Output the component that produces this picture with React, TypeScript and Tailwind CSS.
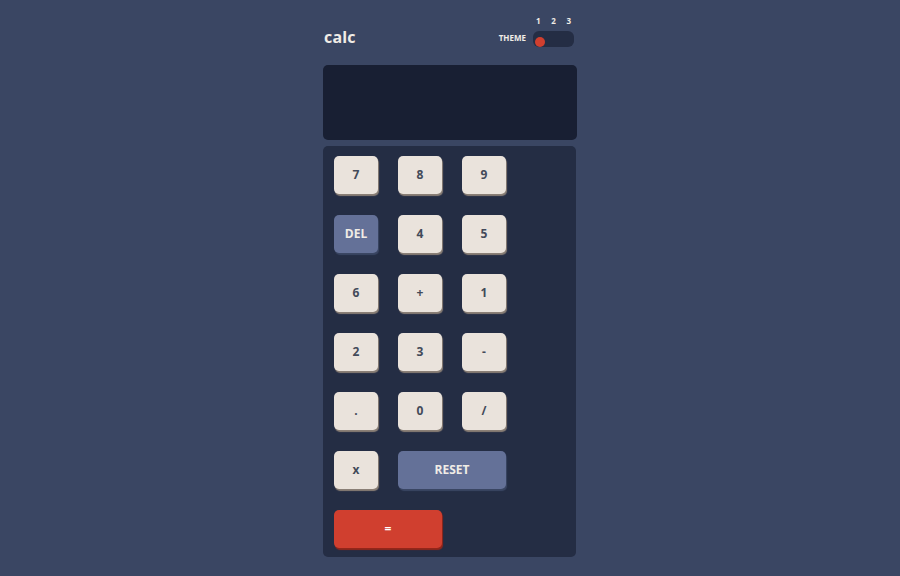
import React from "react";

type K = { label: string; kind?: "num" | "blue" | "red"; span?: boolean };

const keys: K[] = [
  { label: "7" }, { label: "8" }, { label: "9" },
  { label: "DEL", kind: "blue" }, { label: "4" }, { label: "5" },
  { label: "6" }, { label: "+" }, { label: "1" },
  { label: "2" }, { label: "3" }, { label: "-" },
  { label: "." }, { label: "0" }, { label: "/" },
  { label: "x" }, { label: "RESET", kind: "blue", span: true },
  { label: "=", kind: "red", span: true },
];

function Key({ k }: { k: K }) {
  const base =
    "h-[38px] rounded-[5px] flex items-center justify-center font-bold text-[12px]";
  if (k.kind === "blue")
    return (
      <button
        className={`${base} bg-[#647198] text-[#f0ece6] shadow-[1px_2px_1px_#3a4663] ${k.span ? "col-span-2" : ""}`}
      >
        {k.label}
      </button>
    );
  if (k.kind === "red")
    return (
      <button
        className={`${base} bg-[#d03f2f] text-white text-[10px] shadow-[1px_2px_1px_#93261a] col-span-2`}
      >
        {k.label}
      </button>
    );
  return (
    <button
      className={`${base} bg-[#eae3dc] text-[#434a59] shadow-[1px_2px_1px_#8a7f76]`}
    >
      {k.label}
    </button>
  );
}

export default function App() {
  return (
    <div
      className="min-h-[576px] w-full bg-[#3a4663] flex justify-center"
      style={{ fontFamily: '"Open Sans", "Liberation Sans", sans-serif' }}
    >
      <div className="w-[254px] pt-[14px]">
        <div className="flex items-end justify-between h-[33px] pl-px">
          <div className="text-[16px] font-bold text-[#f0ece6] leading-none pb-[2px] tracking-[0.2px]">calc</div>
          <div className="flex items-end gap-[7px] pr-[3px]">
            <div className="text-[8px] font-bold text-[#f0ece6] leading-none pb-[5px]">THEME</div>
            <div className="flex flex-col gap-[6px]">
              <div className="flex justify-between px-[3px] text-[8px] font-bold text-[#f0ece6] leading-none">
                <span>1</span>
                <span>2</span>
                <span>3</span>
              </div>
              <div className="w-[41px] h-[16px] rounded-[6px] bg-[#242d44] relative">
                <span className="absolute left-[2px] top-[6px] w-[10px] h-[10px] rounded-full bg-[#d03f2f]" />
              </div>
            </div>
          </div>
        </div>
        <div className="mt-[18px] h-[75px] rounded-[5px] bg-[#181f33]" />
        <div className="mt-[6px] w-[253px] h-[411px] rounded-[5px] bg-[#242d44] pl-[11px] pt-[10px]">
          <div className="grid grid-cols-[44px_44px_44px] gap-x-[20px] gap-y-[21px]">
            {keys.map((k, i) => (
              <Key key={i} k={k} />
            ))}
          </div>
        </div>
      </div>
    </div>
  );
}
